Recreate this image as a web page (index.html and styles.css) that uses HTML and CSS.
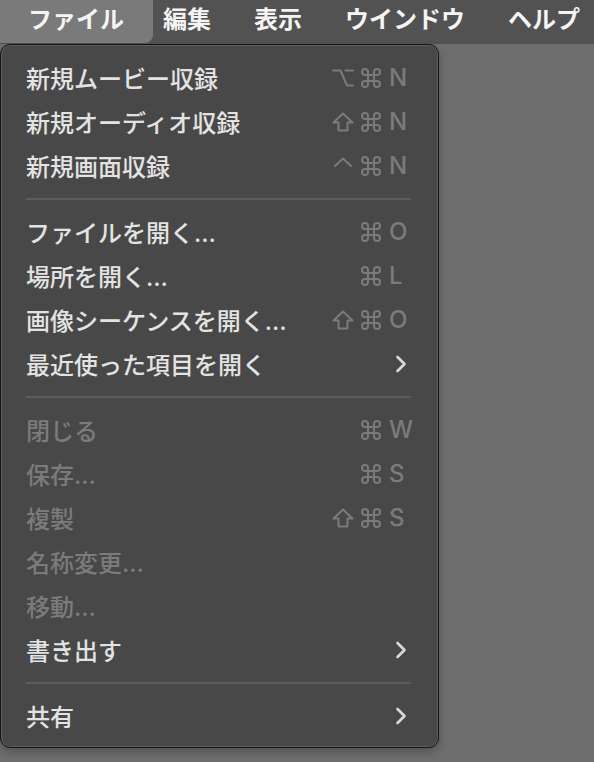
FILE: index.html
```html
<!DOCTYPE html>
<html lang="ja">
<head>
<meta charset="utf-8">
<link rel="stylesheet" href="styles.css">
</head>
<body>
<svg width="0" height="0" class="defs">
  <defs>
    <symbol id="cmd" viewBox="2 2 20 20"><path d="M15 6v12a3 3 0 1 0 3-3H6a3 3 0 1 0 3 3V6a3 3 0 1 0-3 3h12a3 3 0 1 0-3-3z"/></symbol>
    <symbol id="opt" viewBox="0 0 22 20"><path d="M1 2.5h7.5l6.5 15h6 M13.5 2.5h7.5"/></symbol>
    <symbol id="shift" viewBox="0 0 22 20"><path d="M11 1.5 L1.5 10.5 H6.5 V18.5 H15.5 V10.5 H20.5 Z"/></symbol>
    <symbol id="ctrl" viewBox="0 0 22 20"><path d="M3 10 L11 2.5 L19 10"/></symbol>
    <symbol id="chev" viewBox="0 0 12 18"><path d="M2.5 2 L9.5 9 L2.5 16"/></symbol>
  </defs>
</svg>
<header class="menubar">
  <span class="bar-item bar-active">ファイル</span>
  <nav class="bar-rest">
    <span class="bar-item">編集</span>
    <span class="bar-item">表示</span>
    <span class="bar-item">ウインドウ</span>
    <span class="bar-item">ヘルプ</span>
  </nav>
</header>
<main class="desk">
  <div class="menu">
    <div class="row"><span class="label">新規ムービー収録</span><span class="sc"><span class="mods"><svg class="mod"><use href="#opt"/></svg><svg class="mod"><use href="#cmd"/></svg></span><span class="key">N</span></span></div>
    <div class="row"><span class="label">新規オーディオ収録</span><span class="sc"><span class="mods"><svg class="mod"><use href="#shift"/></svg><svg class="mod"><use href="#cmd"/></svg></span><span class="key">N</span></span></div>
    <div class="row"><span class="label">新規画面収録</span><span class="sc"><span class="mods"><svg class="mod"><use href="#ctrl"/></svg><svg class="mod"><use href="#cmd"/></svg></span><span class="key">N</span></span></div>
    <div class="sep"></div>
    <div class="row"><span class="label">ファイルを開く…</span><span class="sc"><span class="mods"><svg class="mod"><use href="#cmd"/></svg></span><span class="key">O</span></span></div>
    <div class="row"><span class="label">場所を開く…</span><span class="sc"><span class="mods"><svg class="mod"><use href="#cmd"/></svg></span><span class="key">L</span></span></div>
    <div class="row"><span class="label">画像シーケンスを開く…</span><span class="sc"><span class="mods"><svg class="mod"><use href="#shift"/></svg><svg class="mod"><use href="#cmd"/></svg></span><span class="key">O</span></span></div>
    <div class="row"><span class="label">最近使った項目を開く</span><span class="sc"><span class="key"><svg class="chev"><use href="#chev"/></svg></span></span></div>
    <div class="sep"></div>
    <div class="row off"><span class="label">閉じる</span><span class="sc"><span class="mods"><svg class="mod"><use href="#cmd"/></svg></span><span class="key">W</span></span></div>
    <div class="row off"><span class="label">保存…</span><span class="sc"><span class="mods"><svg class="mod"><use href="#cmd"/></svg></span><span class="key">S</span></span></div>
    <div class="row off"><span class="label">複製</span><span class="sc"><span class="mods"><svg class="mod"><use href="#shift"/></svg><svg class="mod"><use href="#cmd"/></svg></span><span class="key">S</span></span></div>
    <div class="row off"><span class="label">名称変更…</span></div>
    <div class="row off"><span class="label">移動…</span></div>
    <div class="row"><span class="label">書き出す</span><span class="sc"><span class="key"><svg class="chev"><use href="#chev"/></svg></span></span></div>
    <div class="sep"></div>
    <div class="row"><span class="label">共有</span><span class="sc"><span class="key"><svg class="chev"><use href="#chev"/></svg></span></span></div>
  </div>
</main>
</body>
</html>
```

FILE: styles.css
```css
html, body {
  margin: 0;
  padding: 0;
}
body {
  width: 594px;
  height: 762px;
  overflow: hidden;
  background: #6e6e6e;
  font-family: "Inter", "Noto Sans CJK JP", sans-serif;
}
.defs {
  position: absolute;
  width: 0;
  height: 0;
}
.menubar {
  height: 44px;
  background: #525252;
  display: flex;
  align-items: stretch;
  color: #f4f4f4;
  font-weight: 700;
  font-size: 24px;
  line-height: 40px;
}
.bar-item {
  display: block;
  white-space: nowrap;
}
.bar-active {
  background: #7a7a7a;
  padding: 0 29px 0 28px;
  border-bottom-right-radius: 8px;
  height: 43px;
}
.bar-rest {
  display: flex;
  gap: 43px;
  margin-left: 10px;
}
.desk {
  display: block;
}
.menu {
  width: 437px;
  height: 682px;
  padding: 11px 0 9px;
  background: #484848;
  border: 1px solid #151515;
  border-radius: 10px;
  box-shadow: inset 0 0 0 1px #5e5e5e, 0 4px 10px rgba(0,0,0,0.25);
}
.row {
  height: 44px;
  display: flex;
  align-items: center;
  padding: 0 24px 0 25px;
  color: #e3e3e3;
  font-weight: 500;
  font-size: 24px;
}
.row.off {
  color: #7b7b7b;
}
.label {
  white-space: nowrap;
  padding-bottom: 2px;
}
.sc {
  margin-left: auto;
  display: flex;
  align-items: center;
  color: #7b7b7b;
}
.mods {
  display: flex;
  align-items: center;
  gap: 6px;
  margin-right: 7px;
}
.mod {
  width: 22px;
  height: 20px;
  fill: none;
  stroke: #7b7b7b;
  stroke-width: 2;
  stroke-linejoin: round;
  stroke-linecap: round;
  display: block;
}
.key {
  width: 25px;
  font-family: "Inter", sans-serif;
  font-weight: 500;
  font-size: 24px;
  line-height: 44px;
  display: flex;
  align-items: center;
}
.chev {
  width: 12px;
  height: 18px;
  margin-left: 6px;
  fill: none;
  stroke: #d8d8d8;
  stroke-width: 2.6;
  stroke-linecap: round;
  stroke-linejoin: round;
  display: block;
}
.sep {
  height: 22px;
  display: flex;
  align-items: center;
  padding: 0 27px 0 25px;
}
.sep::before {
  content: "";
  flex: 1;
  height: 2px;
  background: #5c5c5c;
}
```
